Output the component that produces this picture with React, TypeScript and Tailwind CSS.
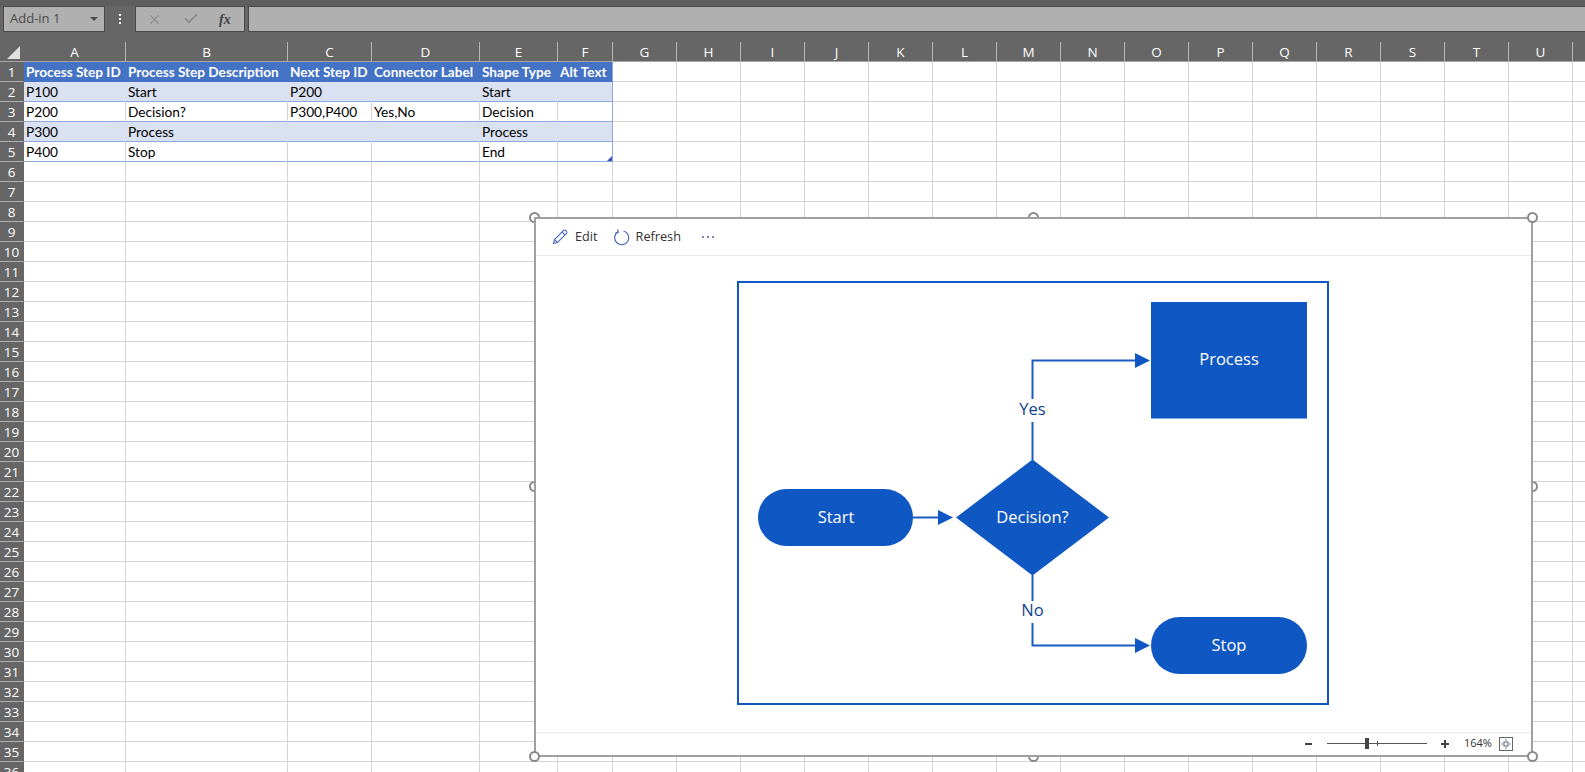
import React from 'react';
import { X, Check } from 'lucide-react';

const colWidths = [102, 162, 84, 108, 78, 55];
const colLetters = 'ABCDEFGHIJKLMNOPQRSTUV'.split('');
const allCols = colLetters.map((_, i) => (i < 6 ? colWidths[i] : 64));

const tableRows = [
  ['Process Step ID', 'Process Step Description', 'Next Step ID', 'Connector Label', 'Shape Type', 'Alt Text'],
  ['P100', 'Start', 'P200', '', 'Start', ''],
  ['P200', 'Decision?', 'P300,P400', 'Yes,No', 'Decision', ''],
  ['P300', 'Process', '', '', 'Process', ''],
  ['P400', 'Stop', '', '', 'End', ''],
];

const Handle = ({ pos }: { pos: string }) => (
  <div className={`absolute w-[11px] h-[11px] rounded-full bg-white border-2 border-[#8a8a8a] ${pos}`} />
);

const Cell = ({ row, col, text }: { row: number; col: number; text: string }) => {
  const inTable = row < 5 && col < 6;
  const isHead = inTable && row === 0;
  const isBand = inTable && (row === 1 || row === 3);
  let cls = 'border-r border-b border-r-[#d4d4d4] border-b-[#d4d4d4] bg-white text-[13.7px]';
  if (isHead) cls = 'border-r border-b border-r-[#4472c4] border-b-[#4472c4] bg-[#4472c4] text-white font-bold text-[13.6px]';
  else if (isBand) cls = 'border-r border-b border-r-[#d9e1f2] border-b-[#8ea9db] bg-[#d9e1f2] text-black text-[13.7px]';
  else if (inTable) cls = 'border-r border-b border-r-[#d4d4d4] border-b-[#8ea9db] bg-white text-black text-[13.7px]';
  if (inTable && col === 5) cls += ' !border-r-[#8ea9db]';
  return (
    <div className={`relative h-5 shrink-0 overflow-visible whitespace-nowrap pl-[2px] font-['Lato',sans-serif] leading-[20px] ${cls}`} style={{ width: allCols[col] }}>
      {text}
      {row === 4 && col === 5 && (
        <svg className="absolute right-0 bottom-0" width="5" height="5" viewBox="0 0 5 5"><path d="M5 0V5H0Z" fill="#3f51b5" /></svg>
      )}
    </div>
  );
};

const Grid = () => (
  <div className="font-['Open_Sans',sans-serif]">
    <div className="flex h-[19px] bg-[#666666] border-b-0">
      <div className="w-6 shrink-0 relative">
        <svg className="absolute left-[7px] top-1" width="14" height="13" viewBox="0 0 14 13"><path d="M13 0V13H0Z" fill="#e0e0e0" /></svg>
      </div>
      {colLetters.map((c, i) => (
        <div key={c} className="shrink-0 border-r border-[#b5b5b5] text-center text-white text-[13.5px] leading-[20px]" style={{ width: allCols[i] }}>{c}</div>
      ))}
    </div>
    <div className="h-[1px] bg-[#a6a6a6]" />
    {Array.from({ length: 36 }, (_, r) => (
      <div key={r} className="flex">
        <div className="w-6 h-5 shrink-0 bg-[#666666] border-b border-r border-b-[#b0b0b0] border-r-[#666666] text-center text-white text-[13.5px] leading-[20px]">{r + 1}</div>
        {allCols.map((_, c) => (
          <Cell key={c} row={r} col={c} text={tableRows[r] && c < 6 ? tableRows[r][c] : ''} />
        ))}
      </div>
    ))}
  </div>
);

const Flowchart = () => (
  <svg width="592" height="424" viewBox="737 281 592 424" className="font-['Open_Sans',sans-serif]">
    <rect x="738" y="282" width="590" height="422" fill="none" stroke="#0f57c2" strokeWidth="2" />
    {/* connectors */}
    <g stroke="#1a5cc0" strokeWidth="2" fill="none">
      <path d="M913 517.5H940" />
      <path d="M1032.5 460V422M1032.5 399V360.5H1137" />
      <path d="M1032.5 575V601M1032.5 623V645.5H1137" />
    </g>
    <g fill="#0f57c2">
      <path d="M938 510L953 517.5L938 525Z" />
      <path d="M1135 353L1150 360.5L1135 368Z" />
      <path d="M1135 638L1150 645.5L1135 653Z" />
      <rect x="758" y="489" width="155" height="57" rx="28.5" />
      <path d="M956 517.5L1032.5 459.5L1109 517.5L1032.5 575.5Z" />
      <rect x="1151" y="302" width="156" height="116.5" />
      <rect x="1151" y="617" width="156" height="57" rx="28.5" />
    </g>
    <g fill="#ffffff" fontSize="16.5" textAnchor="middle">
      <text x="836" y="523">Start</text>
      <text x="1032.5" y="523">Decision?</text>
      <text x="1229" y="365">Process</text>
      <text x="1229" y="651">Stop</text>
    </g>
    <g fill="#123f8e" fontSize="16.5" textAnchor="middle">
      <text x="1032.5" y="415">Yes</text>
      <text x="1032.5" y="616">No</text>
    </g>
  </svg>
);

const AddIn = () => (
  <div className="absolute left-[534px] top-[217px] w-[999px] h-[540px] font-['Open_Sans',sans-serif]">
    {/* side and top handles sit behind the frame, only half of each shows */}
    <Handle pos="-left-[5px] -top-[5px]" />
    <Handle pos="left-[494px] -top-[5px]" />
    <Handle pos="-left-[5px] top-[264px]" />
    <Handle pos="-right-[5px] top-[264px]" />
    <Handle pos="left-[494px] -bottom-[5px]" />

    <div className="relative h-full bg-white border-2 border-[#a0a0a0]">
      <div className="flex items-center h-[37px] border-b border-[#e8e8e8] text-[12.7px] text-[#323130]">
        <svg className="ml-[16px]" width="16" height="16" viewBox="0 0 16 16" fill="none" stroke="#4f6bbd" strokeWidth="1.1">
          <path d="M1.5 14.5L2.5 10.5L11.5 1.5C12.2 0.9 13 0.9 13.7 1.5L14.5 2.3C15.1 3 15.1 3.8 14.5 4.5L5.5 13.5Z" />
          <path d="M10.2 3L13 5.8M2.5 10.5L5.5 13.5" />
        </svg>
        <span className="ml-[7px]">Edit</span>
        <svg className="ml-[15px]" width="17" height="17" viewBox="0 0 17 17" fill="none" stroke="#4f6bbd" strokeWidth="1.2">
          <path d="M5 2.8A7 7 0 1 0 10.5 2" />
          <path d="M4.5 0.5L5.3 3.2L2.5 3.8" />
        </svg>
        <span className="ml-[6px]">Refresh</span>
        <span className="ml-[21px] flex gap-[3px]">
          <i className="block w-[2px] h-[2px] bg-[#7a80b8]" />
          <i className="block w-[2px] h-[2px] bg-[#7a80b8]" />
          <i className="block w-[2px] h-[2px] bg-[#7a80b8]" />
        </span>
      </div>

      <div className="h-[477px] pl-[201px] pt-[25px] border-b border-[#e6e6e6]">
        <Flowchart />
      </div>

      <div className="flex items-center h-[21px] pl-[769px]">
        <div className="w-[7px] h-[2px] bg-[#444444]" />
        <div className="relative ml-[15px] w-[100px] h-[1px] bg-[#555555]">
          <div className="absolute left-[38px] -top-[5px] w-1 h-[11px] bg-[#444444]" />
          <div className="absolute left-[50px] -top-[2px] w-[1px] h-[5px] bg-[#555555]" />
        </div>
        <div className="relative ml-[14px] w-[8px] h-[8px]">
          <div className="absolute left-0 top-[3px] w-[8px] h-[2px] bg-[#444444]" />
          <div className="absolute left-[3px] top-0 w-[2px] h-[8px] bg-[#444444]" />
        </div>
        <span className="ml-[15px] text-[11px] text-[#323130]">164%</span>
        <svg className="ml-[7px]" width="14" height="14" viewBox="0 0 14 14">
          <rect x="0.5" y="0.5" width="13" height="13" fill="none" stroke="#666666" />
          <rect x="5" y="5" width="4" height="4" fill="none" stroke="#666666" />
          <path d="M7 1.8L8.3 3.6H5.7ZM7 12.2L5.7 10.4H8.3ZM1.8 7L3.6 5.7V8.3ZM12.2 7L10.4 8.3V5.7Z" fill="#5b8fd0" />
        </svg>
      </div>
    </div>

    <Handle pos="-right-[5px] -top-[5px]" />
    <Handle pos="-left-[5px] -bottom-[5px]" />
    <Handle pos="-right-[5px] -bottom-[5px]" />
  </div>
);

const FormulaBar = () => (
  <div className="relative h-[42px] bg-[#666666] font-['Open_Sans',sans-serif]">
    <div className="h-[6px] bg-[#5e5e5e]" />
    <div className="flex items-stretch h-[26px]">
      <div className="ml-[3px] w-[102px] flex items-center justify-between bg-[#b0b0b0] border border-[#4a4a4a] pl-[6px] pr-[6px]">
        <span className="text-[13px] text-[#4a4a4a]">Add-in 1</span>
        <svg width="8" height="4" viewBox="0 0 8 4"><path d="M0 0H8L4 4Z" fill="#4a4a4a" /></svg>
      </div>
      <div className="w-[30px] flex flex-col items-center justify-center gap-[2px]">
        <i className="block w-[2px] h-[2px] bg-white" />
        <i className="block w-[2px] h-[2px] bg-white" />
        <i className="block w-[2px] h-[2px] bg-white" />
      </div>
      <div className="w-[110px] flex items-center bg-[#b0b0b0] border border-[#4a4a4a]">
        <X className="ml-[11px] w-[15px] h-[15px] text-[#8c8c8c]" strokeWidth={2} />
        <Check className="ml-[21px] w-[16px] h-[16px] text-[#8c8c8c]" strokeWidth={3} />
        <span className="ml-[20px] font-['Liberation_Serif',serif] italic font-bold text-[14px] text-[#444444]">fx</span>
      </div>
      <div className="ml-[3px] flex-1 bg-[#b0b0b0] border-y border-l border-[#4a4a4a]" />
    </div>
  </div>
);

export default function App() {
  return (
    <div className="relative w-[1585px] h-[772px] overflow-hidden bg-white">
      <FormulaBar />
      <Grid />
      <AddIn />
    </div>
  );
}
